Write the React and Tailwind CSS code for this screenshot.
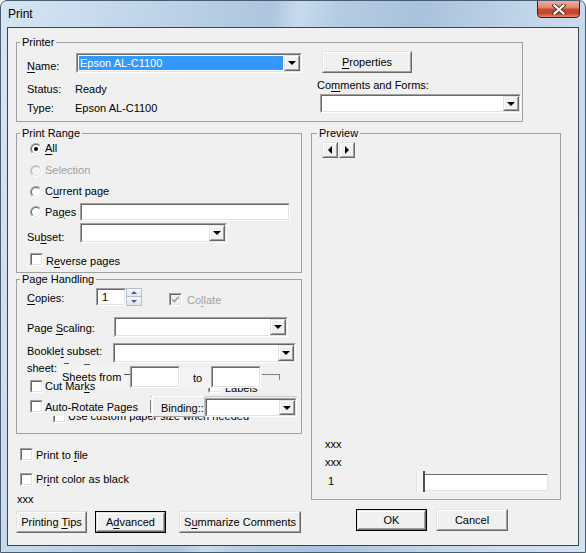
import React from "react";

function U({ children }) {
  return <span className="underline decoration-1 underline-offset-[2px]">{children}</span>;
}

function Sunken({ className = "", inner = "", children }) {
  return (
    <div className={`flex border border-[#a0a0a0] border-b-white border-r-white ${className}`}>
      <div className={`flex flex-1 min-w-0 border border-[#696969] border-b-[#e3e3e3] border-r-[#e3e3e3] ${inner}`}>
        {children}
      </div>
    </div>
  );
}

function Raised({ className = "", children }) {
  return (
    <div className={`flex border border-[#e3e3e3] border-b-[#696969] border-r-[#696969] bg-[#f0f0f0] ${className}`}>
      <div className="flex flex-1 items-center justify-center border border-white border-b-[#a0a0a0] border-r-[#a0a0a0]">
        {children}
      </div>
    </div>
  );
}

function DownArrow() {
  return <span className="w-0 h-0 border-x-[4px] border-x-transparent border-t-[4px] border-t-black" />;
}

function Combo({ className = "", selected, children }) {
  return (
    <Sunken className={className} inner="bg-white">
      <div className="flex flex-1 min-w-0 p-[1px]">
        <div className={`flex flex-1 items-center px-[1px] ${selected ? "bg-[#3399ff] text-white" : ""}`}>{children}</div>
      </div>
      <Raised className="w-[16px]">
        <DownArrow />
      </Raised>
    </Sunken>
  );
}

function Button({ className = "", def, children }) {
  return (
    <div className={`flex ${def ? "border border-black" : ""} ${className}`}>
      <Raised className="flex-1">{children}</Raised>
    </div>
  );
}

function Check({ checked, disabled }) {
  return (
    <Sunken className="w-[13px] h-[13px] shrink-0" inner={`items-center justify-center ${disabled ? "bg-[#f0f0f0]" : "bg-white"}`}>
      {checked && (
        <svg viewBox="0 0 9 9" className="w-[9px] h-[9px]">
          <path d="M1.2 4.2 L3.4 6.6 L7.8 1.8" fill="none" stroke={disabled ? "#a0a0a0" : "#000"} strokeWidth="1.7" />
        </svg>
      )}
    </Sunken>
  );
}

function Radio({ checked, disabled }) {
  return (
    <span
      className={`flex w-[12px] h-[12px] shrink-0 rounded-full border ${
        disabled ? "border-[#c8c8c8]" : "border-[#a0a0a0]"
      } border-b-white border-r-white`}
    >
      <span
        className={`flex flex-1 items-center justify-center rounded-full border ${
          disabled ? "border-[#b4b4b4] bg-[#f4f4f4]" : "border-[#696969] bg-white"
        } border-b-[#e3e3e3] border-r-[#e3e3e3]`}
      >
        {checked && <span className="w-[4px] h-[4px] rounded-full bg-black" />}
      </span>
    </span>
  );
}

function Group({ label, className = "", legend = "ml-[3px]", children }) {
  return (
    <fieldset className={`border border-[#a0a0a0] ${className}`}>
      <legend className={`${legend} px-[2px] leading-[13px]`}>{label}</legend>
      {children}
    </fieldset>
  );
}

function CloseButton() {
  return (
    <div className="-mt-[1px] w-[43px] h-[18px] flex items-center justify-center rounded-b-[4px] border border-[#4d1a12] bg-[linear-gradient(#eab0a2_0%,#df8470_42%,#c9472d_52%,#c5452b_78%,#e38d6f_100%)]">
      <svg viewBox="0 0 14 11" className="w-[14px] h-[11px]">
        <path d="M2.5 1.5 L11.5 9.5 M11.5 1.5 L2.5 9.5" stroke="#5a2a22" strokeWidth="4" strokeLinecap="square" />
        <path d="M2.5 1.5 L11.5 9.5 M11.5 1.5 L2.5 9.5" stroke="#ffffff" strokeWidth="2.2" strokeLinecap="square" />
      </svg>
    </div>
  );
}

function Spinner() {
  return (
    <div className="flex h-[18px]">
      <Sunken className="w-[30px] h-[18px]" inner="bg-white items-center pl-[4px]">
        1
      </Sunken>
      <div className="flex flex-col w-[16px] h-[18px]">
        <div className="h-[9px] flex items-center justify-center border border-[#b3c0d2] bg-[linear-gradient(#f7f9fc,#dfe6ef)]">
          <span className="w-0 h-0 border-x-[3px] border-x-transparent border-b-[3px] border-b-[#4d6185]" />
        </div>
        <div className="h-[9px] flex items-center justify-center border border-[#b3c0d2] border-t-0 bg-[linear-gradient(#f7f9fc,#dfe6ef)]">
          <span className="w-0 h-0 border-x-[3px] border-x-transparent border-t-[3px] border-t-[#4d6185]" />
        </div>
      </div>
    </div>
  );
}

export default function App() {
  return (
    <div className="w-[586px] h-[553px] flex flex-col overflow-hidden rounded-t-[7px] border border-[#4a5d70] bg-[linear-gradient(100deg,#d6e5f3_0%,#c2d6ea_20%,#adc5de_40%,#c8dbee_44%,#b4cbe3_50%,#a9c2dd_62%,#c5d8eb_80%,#d3e2f1_100%)] font-['Liberation_Sans',Arial,sans-serif] text-[11px] leading-[13px] text-black">
      {/* title bar */}
      <div className="h-[26px] shrink-0 flex items-start justify-between pl-[7px] pr-[5px]">
        <span className="mt-[6px] text-[12px] leading-[14px]">Print</span>
        <CloseButton />
      </div>

      {/* client */}
      <div className="mx-[6px] h-[519px] shrink-0 border border-[#3c4650] bg-[#f0f0f0] pl-[8px] pt-[8px]">
        <Group label="Printer" className="w-[507px] h-[86px]">
          <div className="flex">
            <div className="w-[285px] pl-[10px]">
              <div className="mt-[4px] flex items-start h-[20px]">
                <span className="w-[49px] mt-[7px]">
                  <U>N</U>ame:
                </span>
                <Combo className="w-[226px] h-[20px]" selected>
                  Epson AL-C1100
                </Combo>
              </div>
              <div className="mt-[10px] flex">
                <span className="w-[48px]">Status:</span>
                <span>Ready</span>
              </div>
              <div className="mt-[6px] flex">
                <span className="w-[48px]">Type:</span>
                <span>Epson AL-C1100</span>
              </div>
            </div>
            <div className="ml-[15px] mt-[2px]">
              <Button className="ml-[5px] w-[90px] h-[22px]">
                <span>
                  <U>P</U>roperties
                </span>
              </Button>
              <div className="mt-[6px]">
                Co<U>m</U>ments and Forms:
              </div>
              <Combo className="mt-[2px] ml-[3px] w-[201px] h-[19px]" />
            </div>
          </div>
        </Group>

        <div className="flex mt-[5px]">
          {/* left column */}
          <div className="w-[286px]">
            <Group label="Print Range" className="w-[286px] h-[146px]">
              <div className="mt-[2px] h-[13px] flex items-center pl-[13px]">
                <Radio checked />
                <span className="ml-[3px]">
                  <U>A</U>ll
                </span>
              </div>
              <div className="mt-[9px] h-[13px] flex items-center pl-[13px]">
                <Radio disabled />
                <span className="ml-[3px] text-[#a0a0a0]">Selection</span>
              </div>
              <div className="mt-[8px] h-[13px] flex items-center pl-[13px]">
                <Radio />
                <span className="ml-[3px]">
                  C<U>u</U>rrent page
                </span>
              </div>
              <div className="mt-[5px] h-[18px] flex items-center pl-[13px]">
                <Radio />
                <span className="ml-[3px] w-[35px]">
                  Pa<U>g</U>es
                </span>
                <Sunken className="w-[210px] h-[18px]" inner="bg-white" />
              </div>
              <div className="mt-[2px] h-[20px] flex items-start pl-[10px]">
                <span className="w-[53px] mt-[8px]">
                  Su<U>b</U>set:
                </span>
                <Combo className="w-[147px] h-[20px]" />
              </div>
              <div className="mt-[10px] h-[13px] flex items-start pl-[13px]">
                <Check />
                <span className="ml-[3px] mt-[2px]">
                  R<U>e</U>verse pages
                </span>
              </div>
            </Group>

            <Group label="Page Handling" className="w-[286px] h-[161px]">
              <div className="mt-[2px] h-[18px] flex items-start pl-[10px]">
                <span className="w-[69px] mt-[4px]">
                  <U>C</U>opies:
                </span>
                <Spinner />
                <span className="ml-[27px] mt-[5px]">
                  <Check checked disabled />
                </span>
                <span className="ml-[5px] mt-[6px] text-[#a0a0a0]">
                  Co<U>l</U>late
                </span>
              </div>
              <div className="mt-[11px] h-[20px] flex items-start pl-[10px]">
                <span className="w-[87px] mt-[5px]">
                  Page <U>S</U>caling:
                </span>
                <Combo className="w-[174px] h-[20px]" />
              </div>
              <div className="mt-[6px] h-[20px] flex items-start pl-[10px]">
                <span className="w-[86px] mt-[2px]">
                  Bookle<U>t</U> subset:
                </span>
                <Combo className="w-[183px] h-[20px]" />
              </div>

              {/* overlapping controls of the booklet area */}
              <div className="relative h-[70px]">
                <span className="absolute left-[191px] top-[17px]">
                  <Check />
                </span>
                <span className="absolute left-[208px] top-[19px]">Labels</span>
                <span className="absolute left-[10px] top-[-1px]">sheet:</span>
                <span className="absolute left-[47px] top-[0px] w-[5px] h-[1px] bg-[#555]" />
                <span className="absolute left-[67px] top-[1px] w-[6px] h-[1px] bg-[#555]" />
                <div className="absolute left-[40px] top-[3px] w-[70px] h-[22px] bg-[#f3f3f3] flex items-center pl-[5px]">
                  Sheets from
                </div>
                <span className="absolute left-[107px] top-[11px] w-[6px] h-[1px] bg-[#555]" />
                <Sunken className="absolute left-[113px] top-[3px] w-[50px] h-[22px]" inner="bg-white" />
                <div className="absolute left-[163px] top-[5px] w-[31px] h-[20px] bg-[#f3f3f3] flex items-center pl-[13px]">
                  to
                </div>
                <Sunken className="absolute left-[194px] top-[3px] w-[50px] h-[22px]" inner="bg-white" />
                <span className="absolute left-[245px] top-[11px] w-[18px] h-[6px] border-t border-r border-[#808080]" />
                <span className="absolute left-[13px] top-[17px]">
                  <Check />
                </span>
                <span className="absolute left-[28px] top-[17px]">
                  Cut Mar<U>k</U>s
                </span>
                <div className="absolute left-[36px] top-[53px] w-[250px] h-[8px] overflow-hidden">
                  <div className="flex items-start -mt-[6px]">
                    <Check />
                    <span className="ml-[2px] whitespace-nowrap">Use custom paper size when needed</span>
                  </div>
                </div>
                <span className="absolute left-[13px] top-[37px]">
                  <Check />
                </span>
                <span className="absolute left-[28px] top-[38px]">Auto-Rotate Pages</span>
                <span className="absolute left-[133px] top-[33px] w-[147px] h-[1px] bg-[#c8c8c8]" />
                <span className="absolute left-[133px] top-[37px] w-[1px] h-[13px] bg-[#808080]" />
                <div className="absolute left-[135px] top-[33px] w-[53px] h-[21px] flex items-center pl-[8px] pt-[3px] bg-[#f0f0f0] border border-white border-b-[#a0a0a0] border-r-[#c8c8c8]">
                  Binding::
                </div>
                <Combo className="absolute left-[188px] top-[35px] w-[92px] h-[19px]" />
              </div>
            </Group>

            <div className="mt-[14px] h-[13px] flex items-start pl-[4px]">
              <Check />
              <span className="ml-[3px] mt-[1px]">
                Print to <U>f</U>ile
              </span>
            </div>
            <div className="mt-[12px] h-[13px] flex items-center pl-[4px]">
              <Check />
              <span className="ml-[3px]">
                Pr<U>i</U>nt color as black
              </span>
            </div>
            <div className="mt-[7px] pl-[1px]">xxx</div>
            <div className="mt-[5px] flex">
              <Button className="w-[71px] h-[22px]">
                <span>
                  Printing <U>T</U>ips
                </span>
              </Button>
              <Button className="ml-[8px] w-[71px] h-[22px]" def>
                <span>
                  A<U>d</U>vanced
                </span>
              </Button>
              <Button className="ml-[13px] w-[122px] h-[22px]">
                <span>
                  S<U>u</U>mmarize Comments
                </span>
              </Button>
            </div>
          </div>

          {/* right column */}
          <div className="ml-[9px] w-[250px]">
            <Group label="Preview" legend="ml-[5px]" className="w-[250px] h-[373px]">
              <div className="ml-[10px] mt-[2px] flex gap-[1px]">
                <Raised className="w-[16px] h-[16px]">
                  <span className="w-0 h-0 border-y-[4px] border-y-transparent border-r-[4px] border-r-black" />
                </Raised>
                <Raised className="w-[16px] h-[16px]">
                  <span className="w-0 h-0 border-y-[4px] border-y-transparent border-l-[4px] border-l-black" />
                </Raised>
              </div>
              <div className="mt-[280px] pl-[13px]">xxx</div>
              <div className="mt-[5px] pl-[13px]">xxx</div>
              <div className="mt-[2px] h-[21px] flex items-center">
                <span className="ml-[16px] w-[88px]">1</span>
                <span className="w-[9px] h-[21px] bg-[#f6f6f6] border-l border-[#e3e3e3] border-r-2 border-r-[#505050]" />
                <div className="w-[123px] h-[17px] self-end mb-[1px] bg-white border-t border-[#6d6d6d] border-r border-r-[#e3e3e3] border-b border-b-[#e3e3e3]" />
              </div>
            </Group>
            <div className="mt-[9px] flex">
              <Button className="ml-[45px] w-[71px] h-[22px]" def>
                OK
              </Button>
              <Button className="ml-[9px] w-[72px] h-[22px]">Cancel</Button>
            </div>
          </div>
        </div>
      </div>
    </div>
  );
}
